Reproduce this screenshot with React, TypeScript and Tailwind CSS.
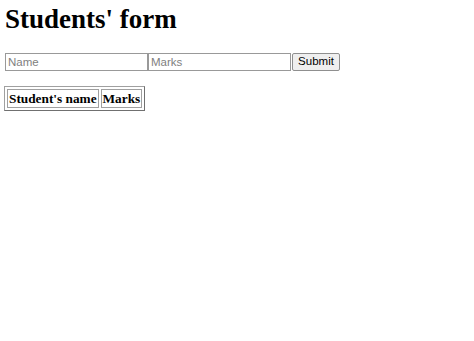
export default function App() {
  return (
    <div className="bg-white min-h-screen px-[5px] pt-[5px] text-black" style={{ fontFamily: '"Liberation Serif", serif' }}>
      <h1 className="text-[27px] font-bold leading-[28px] m-0">Students' form</h1>
      <form className="mt-[20px] flex items-center" style={{ fontFamily: '"Liberation Sans", sans-serif' }}>
        <input
          placeholder="Name"
          className="w-[143px] h-[18px] border border-[#999999] px-[2px] text-[11.5px] placeholder:text-[#808080] outline-none"
        />
        <input
          placeholder="Marks"
          className="w-[143px] h-[18px] border border-[#999999] px-[2px] text-[11.5px] placeholder:text-[#808080] outline-none"
        />
        <button
          type="button"
          className="ml-[1px] h-[18px] w-[48px] border border-[#8f8f8f] bg-[#efefef] text-[11.5px] leading-none rounded-[2px]"
        >
          Submit
        </button>
      </form>
      <table className="mt-[15px] border border-[#a0a0a0] border-b-[#707070] border-r-[#707070] border-separate border-spacing-[2px] -ml-[1px]">
        <thead>
          <tr>
            <th className="border border-[#a0a0a0] px-[1px] py-[1px] text-[13.3px] leading-[15px] font-bold">Student's name</th>
            <th className="border border-[#a0a0a0] px-[1px] py-[1px] text-[13.3px] leading-[15px] font-bold">Marks</th>
          </tr>
        </thead>
      </table>
    </div>
  );
}
